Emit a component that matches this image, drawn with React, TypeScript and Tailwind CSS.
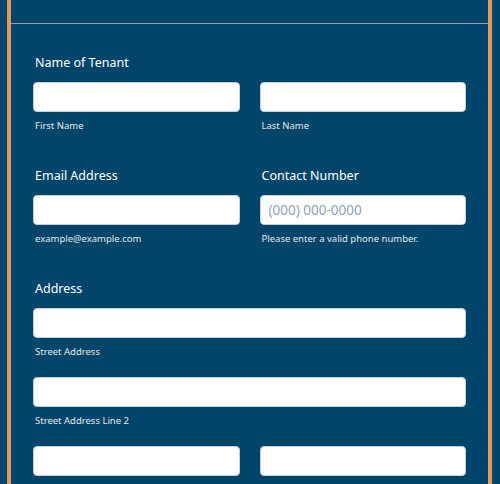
import React from "react";

const font = { fontFamily: '"Noto Sans", "Liberation Sans", sans-serif' };

interface IFieldProps {
    sub?: string;
    placeholder?: string;
}

const Field = ({ sub, placeholder }: IFieldProps) => (
    <div className="flex flex-col">
        <input
            readOnly
            placeholder={placeholder}
            className="h-[30px] w-full rounded-[4px] border border-[#c6ced6] bg-white px-[8px] text-[13.5px] text-[#2c3345] outline-none placeholder:text-[#8fa2b6]"
        />
        {sub && (
            <span className="mt-[8px] pl-[2px] text-[9.5px] leading-[12px] text-[#e3e9ee]">
                {sub}
            </span>
        )}
    </div>
);

const Label = ({ children }: { children: React.ReactNode }) => (
    <p className="mb-[11px] pl-[2px] text-[12.5px] leading-[16px] text-white">{children}</p>
);

export default function App() {
    return (
        <div
            className="h-[484px] overflow-hidden bg-[#02456a] pl-[7px] pr-[8px]"
            style={font}
        >
            <div className="h-full border-x-4 border-[#e09a5c]">
                <div className="h-[23px]" />
                <div className="h-px bg-[#8ea4b6]" />

                <div className="flex flex-col gap-[36px] px-[22px] pt-[31px]">
                    <div>
                        <Label>Name of Tenant</Label>
                        <div className="grid grid-cols-2 gap-[20px]">
                            <Field sub="First Name" />
                            <Field sub="Last Name" />
                        </div>
                    </div>

                    <div className="grid grid-cols-2 gap-[20px]">
                        <div>
                            <Label>Email Address</Label>
                            <Field sub="example@example.com" />
                        </div>
                        <div>
                            <Label>Contact Number</Label>
                            <Field
                                sub="Please enter a valid phone number."
                                placeholder="(000) 000-0000"
                            />
                        </div>
                    </div>

                    <div>
                        <Label>Address</Label>
                        <div className="flex flex-col gap-[19px]">
                            <Field sub="Street Address" />
                            <Field sub="Street Address Line 2" />
                            <div className="grid grid-cols-2 gap-[20px]">
                                <Field />
                                <Field />
                            </div>
                        </div>
                    </div>
                </div>
            </div>
        </div>
    );
}
